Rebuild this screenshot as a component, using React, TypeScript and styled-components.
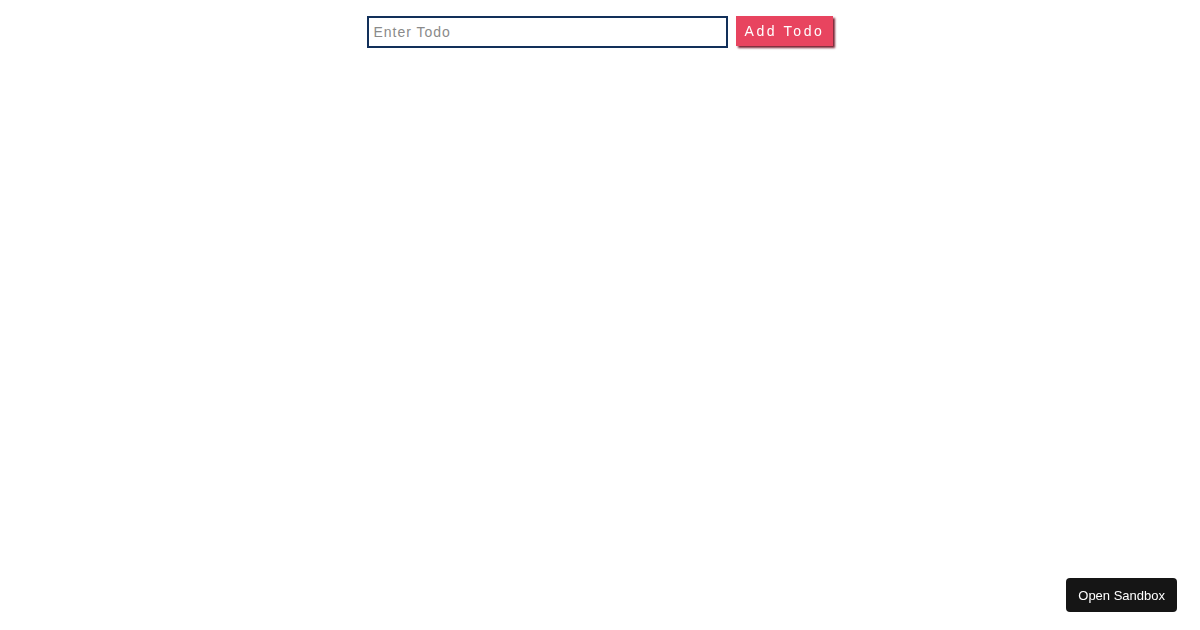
import React, { useState } from 'react';
import styled, { createGlobalStyle } from 'styled-components';

const GlobalStyle = createGlobalStyle`
  html, body {
    margin: 0;
    padding: 0;
    background: #ffffff;
    font-family: "Liberation Sans", Arial, sans-serif;
  }
`;

const Page = styled.div`
  height: 630px;
  display: flex;
  flex-direction: column;
  justify-content: space-between;
`;

const TodoForm = styled.form`
  display: flex;
  justify-content: center;
  align-items: flex-start;
  gap: 8px;
  padding-top: 16px;
`;

const TodoInput = styled.input`
  box-sizing: border-box;
  width: 361px;
  height: 32px;
  padding: 0 4px;
  border: 2px solid #12305a;
  outline: none;
  font-family: "Liberation Sans", Arial, sans-serif;
  font-size: 14px;
  letter-spacing: 1px;
  color: #333;

  &::placeholder {
    color: #8a8a8a;
  }
`;

const AddButton = styled.button`
  box-sizing: border-box;
  height: 30px;
  padding: 0 8px;
  border: none;
  background: #e8445f;
  color: #ffffff;
  font-family: "Liberation Sans", Arial, sans-serif;
  font-size: 14px;
  letter-spacing: 2.65px;
  box-shadow: 2px 2px 2px #7a2232;
  cursor: pointer;
`;

const Footer = styled.div`
  display: flex;
  justify-content: flex-end;
  padding: 0 23px 18px 0;
`;

const SandboxButton = styled.button`
  height: 34px;
  padding: 0 12px;
  border: none;
  border-radius: 4px;
  background: #151515;
  color: #ffffff;
  font-family: "Liberation Sans", Arial, sans-serif;
  font-size: 13px;
`;

function App() {
  const [todo, setTodo] = useState('');

  const handleSubmit = (e) => {
    e.preventDefault();
    setTodo('');
  };

  return (
    <Page>
      <GlobalStyle />
      <TodoForm onSubmit={handleSubmit}>
        <TodoInput
          value={todo}
          placeholder="Enter Todo"
          onChange={(e) => setTodo(e.target.value)}
          autoFocus
        />
        <AddButton type="submit">Add Todo</AddButton>
      </TodoForm>
      <Footer>
        <SandboxButton>Open Sandbox</SandboxButton>
      </Footer>
    </Page>
  );
}

export default App;
